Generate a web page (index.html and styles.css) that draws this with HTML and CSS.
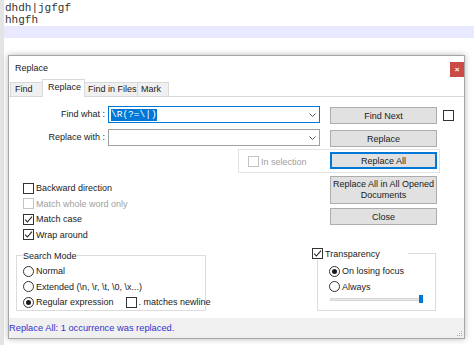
FILE: index.html
```html
<!DOCTYPE html>
<html>
<head>
    <title>Replace</title>
    <link rel="stylesheet" href="styles.css">
</head>
<body>
    <div id="editor">
        <div class="line">dhdh|jgfgf</div>
        <div class="line">hhgfh</div>
        <div class="line current"></div>
    </div>

    <div id="replaceDialog">
        <div class="titlebar">
            <span class="title">Replace</span>
            <span class="close">×</span>
        </div>
        <div class="tabs">
            <div class="tab tab-find">Find</div>
            <div class="tab tab-replace active">Replace</div>
            <div class="tab tab-files">Find in Files</div>
            <div class="tab tab-mark">Mark</div>
        </div>
        <div class="panel">
            <div class="row">
                <label class="field-label">Find what :</label>
                <div class="combo focused">
                    <span class="selected-text">\R(?=\|)</span>
                    <svg class="arrow" width="7" height="4" viewBox="0 0 7 4"><path d="M0.5 0.5 L3.5 3.5 L6.5 0.5" fill="none" stroke="#555" stroke-width="1"/></svg>
                </div>
                <button class="btn">Find Next</button>
                <span class="check side-check"></span>
            </div>
            <div class="row">
                <label class="field-label">Replace with :</label>
                <div class="combo">
                    <span></span>
                    <svg class="arrow" width="7" height="4" viewBox="0 0 7 4"><path d="M0.5 0.5 L3.5 3.5 L6.5 0.5" fill="none" stroke="#555" stroke-width="1"/></svg>
                </div>
                <button class="btn">Replace</button>
            </div>
            <div class="selection">
                <div class="option disabled"><span class="check"></span>In selection</div>
                <button class="btn default">Replace All</button>
            </div>

            <div class="middle">
                <div class="options">
                    <div class="option"><span class="check"></span>Backward direction</div>
                    <div class="option disabled"><span class="check"></span>Match whole word only</div>
                    <div class="option"><span class="check"><svg width="9" height="9" viewBox="0 0 9 9"><path d="M1.2 4.6 L3.4 7 L8 1.6" fill="none" stroke="#222" stroke-width="1.1"/></svg></span>Match case</div>
                    <div class="option"><span class="check"><svg width="9" height="9" viewBox="0 0 9 9"><path d="M1.2 4.6 L3.4 7 L8 1.6" fill="none" stroke="#222" stroke-width="1.1"/></svg></span>Wrap around</div>
                </div>
                <div class="actions">
                    <button class="btn tall">Replace All in All Opened Documents</button>
                    <button class="btn">Close</button>
                </div>
            </div>

            <div class="bottom">
                <fieldset class="search-mode">
                    <legend>Search Mode</legend>
                    <div class="option"><span class="radio"></span>Normal</div>
                    <div class="option"><span class="radio"></span>Extended (\n, \r, \t, \0, \x...)</div>
                    <div class="option"><span class="radio on"></span>Regular expression<span class="check newline-check"></span>. matches newline</div>
                </fieldset>
                <fieldset class="transparency">
                    <legend><span class="check"><svg width="9" height="9" viewBox="0 0 9 9"><path d="M1.2 4.6 L3.4 7 L8 1.6" fill="none" stroke="#222" stroke-width="1.1"/></svg></span>Transparency</legend>
                    <div class="option"><span class="radio on"></span>On losing focus</div>
                    <div class="option"><span class="radio"></span>Always</div>
                    <div class="slider">
                        <div class="track"></div>
                        <div class="thumb"></div>
                    </div>
                </fieldset>
            </div>
        </div>
        <div class="status">
            <span class="message">Replace All: 1 occurrence was replaced.</span>
            <svg class="grip" width="7" height="7" viewBox="0 0 7 7">
                <rect x="5" y="1" width="1" height="1" fill="#aaa"/>
                <rect x="3" y="3" width="1" height="1" fill="#aaa"/>
                <rect x="5" y="3" width="1" height="1" fill="#aaa"/>
                <rect x="1" y="5" width="1" height="1" fill="#aaa"/>
                <rect x="3" y="5" width="1" height="1" fill="#aaa"/>
                <rect x="5" y="5" width="1" height="1" fill="#aaa"/>
            </svg>
        </div>
    </div>
</body>
</html>
```

FILE: styles.css
```css
* {
    box-sizing: border-box;
}
body {
    margin: 0;
    width: 474px;
    height: 345px;
    overflow: hidden;
    position: relative;
    background: #fff;
    color: #1a1a1a;
    font-family: "Liberation Sans", Arial, sans-serif;
    font-size: 9px;
}

/* editor behind the dialog */
#editor {
    height: 345px;
    border-left: 4px solid #e4e4e4;
    padding-top: 2px;
    font-family: "Liberation Mono", monospace;
    font-size: 11px;
    color: #333;
}
#editor .line {
    height: 12px;
    line-height: 12px;
    padding-left: 1px;
}
#editor .current {
    background: #e8e8ff;
}

/* dialog window */
#replaceDialog {
    position: absolute;
    left: 8px;
    top: 55px;
    width: 457px;
    height: 284px;
    border: 1px solid #a6a6a6;
    background: #fff;
    box-shadow: 0 0 6px rgba(0, 0, 0, 0.28);
    display: flex;
    flex-direction: column;
}
.titlebar {
    height: 23px;
    flex: none;
    display: flex;
    justify-content: space-between;
    align-items: flex-start;
}
.title {
    padding-left: 6px;
    line-height: 25px;
}
.close {
    width: 14px;
    height: 15px;
    margin-top: 6px;
    background: #c94a47;
    color: #fff;
    font-size: 8px;
    font-weight: bold;
    line-height: 15px;
    text-align: center;
}

.tabs {
    height: 17px;
    flex: none;
    display: flex;
    align-items: flex-end;
    padding-left: 1px;
    position: relative;
    z-index: 1;
}
.tab {
    height: 14px;
    line-height: 13px;
    border: 1px solid #d9d9d9;
    border-bottom: none;
    background: #f0f0f0;
    padding-left: 3px;
    margin-right: -1px;
}
.tab.active {
    height: 18px;
    margin-bottom: -1px;
    background: #fff;
    line-height: 15px;
    padding-left: 5px;
}
.tab-find { width: 33px; padding-left: 4px; }
.tab-replace { width: 43px; }
.tab-files { width: 54px; }
.tab-mark { width: 32px; }

.panel {
    height: 222px;
    flex: none;
    border-top: 1px solid #d9d9d9;
    padding-top: 9px;
}

.row {
    display: flex;
    height: 17px;
    align-items: flex-start;
}
.row + .row {
    margin-top: 6px;
}
.field-label {
    width: 96px;
    text-align: right;
    line-height: 17px;
}
.combo {
    width: 212px;
    height: 17px;
    margin-left: 3px;
    border: 1px solid #a0a0a0;
    display: flex;
    align-items: center;
    justify-content: space-between;
    padding: 0 3px 0 2px;
}
.combo.focused {
    border-color: #0078d7;
}
.selected-text {
    font-family: "Liberation Mono", monospace;
    font-size: 9.5px;
    line-height: 12px;
    background: #0078d7;
    color: #fff;
}

.btn {
    width: 107px;
    height: 17px;
    margin: 1px 0 0 10px;
    padding: 0;
    border: 1px solid #adadad;
    background: #e1e1e1;
    color: #1a1a1a;
    font: inherit;
}
.btn.default {
    border: 2px solid #0078d7;
}
.btn.tall {
    height: 28px;
    line-height: 11px;
}

.check, .radio {
    width: 11px;
    height: 11px;
    flex: none;
    border: 1px solid #333;
    background: #fff;
    margin-right: 2px;
    display: inline-flex;
    align-items: center;
    justify-content: center;
}
.radio {
    border-radius: 50%;
}
.radio.on::after {
    content: "";
    width: 5px;
    height: 5px;
    border-radius: 50%;
    background: #1a1a1a;
}
.side-check {
    margin: 4px 0 0 6px;
    width: 11px;
}

.option {
    display: flex;
    align-items: center;
    height: 15.5px;
    white-space: nowrap;
}
.option.disabled {
    color: #a0a0a0;
}
.option.disabled .check {
    border-color: #c4c4c4;
}

.selection {
    margin: 3px 0 0 229px;
    width: 202px;
    height: 24px;
    border: 1px solid #e3e3e3;
    display: flex;
    align-items: flex-start;
    padding: 2px 2px 0 9px;
}
.selection .option {
    height: 11px;
    margin-top: 4px;
}
.selection .btn {
    margin: 0 0 0 auto;
}

.middle {
    display: flex;
    margin-top: 3px;
}
.options {
    width: 321px;
    padding: 4.5px 0 0 14px;
}
.actions {
    display: flex;
    flex-direction: column;
}
.actions .btn {
    margin: 0;
}
.actions .btn + .btn {
    margin-top: 4px;
}

.bottom {
    display: flex;
    align-items: flex-start;
}
fieldset {
    margin: 0;
    min-width: 0;
    border: 1px solid #dcdcdc;
}
legend {
    padding: 0;
    line-height: 12px;
}
.search-mode {
    margin: 7px 0 0 7px;
    width: 190px;
    padding: 1.75px 0 0 6px;
}
.newline-check {
    margin-left: 12px;
}
.transparency {
    margin: 5px 0 0 111px;
    width: 119px;
    padding: 3.75px 0 5.75px 11px;
}
.transparency legend {
    margin-left: -17px;
    width: 96px;
    display: flex;
    align-items: center;
}
.slider {
    display: flex;
    align-items: center;
    height: 10px;
    padding-left: 1px;
}
.track {
    width: 91px;
    height: 3px;
    background: #e7e7e7;
    border: 1px solid #d6d6d6;
}
.thumb {
    width: 4px;
    height: 8px;
    margin-left: -2px;
    background: #0078d7;
}

.status {
    height: 20px;
    flex: none;
    background: #f0f0f0;
    color: #3333cc;
    font-size: 9.3px;
    display: flex;
    justify-content: space-between;
    align-items: center;
}
.grip {
    align-self: flex-end;
    margin: 0 1px 1px 0;
}
```
